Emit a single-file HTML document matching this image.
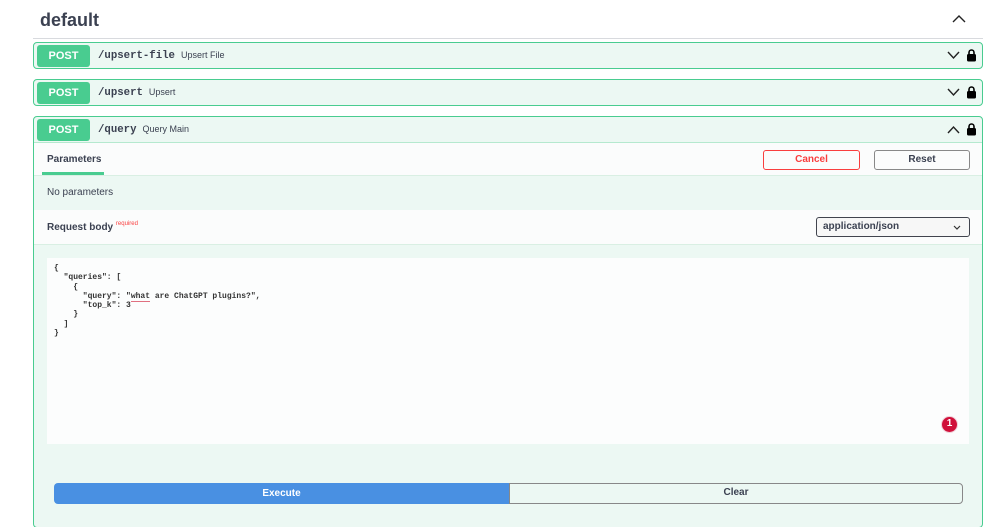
<!DOCTYPE html>
<html><head><meta charset="utf-8"><style>
*{box-sizing:border-box;margin:0;padding:0}
html,body{width:1000px;height:527px;overflow:hidden}
body{background:#fff;font-family:"Liberation Sans",sans-serif;color:#3b4151;position:relative}
.abs{position:absolute}
.blk{position:absolute;left:33px;width:950px;border:1px solid #49cc90;border-radius:4px;background:#ecf8f3}
.post{position:absolute;left:3px;top:2px;width:53px;height:22px;background:#49cc90;border-radius:3px;color:#fff;font-weight:bold;font-size:11px;text-align:center;line-height:22px}
.path{position:absolute;left:64px;top:7px;font-family:"Liberation Mono",monospace;font-weight:bold;font-size:10.7px;color:#3b4151}
.desc{font-family:"Liberation Sans",sans-serif;font-weight:normal;font-size:9px;margin-left:6px}
.chev{position:absolute;right:22px;top:8px}
.lock{position:absolute;right:5px;top:5px}
</style></head><body>
<div class="abs" style="left:40px;top:10px;font-size:18px;font-weight:bold">default</div>
<svg class="abs" style="left:952px;top:14px" width="14" height="10"><path d="M1 8 L7 2 L13 8" fill="none" stroke="#222" stroke-width="1.4"/></svg>
<div class="abs" style="left:33px;top:38px;width:950px;height:1px;background:#d8dade"></div>

<div class="blk" style="top:42px;height:27px">
<div class="post">POST</div><div class="path">/upsert-file<span class="desc">Upsert File</span></div>
<svg class="chev" width="13" height="9"><path d="M1 1 L6.5 7 L12 1" fill="none" stroke="#222" stroke-width="1.4"/></svg>
<svg class="lock" width="11" height="14"><path d="M3 7V4.5a2.5 2.5 0 0 1 5 0V7" fill="none" stroke="#000" stroke-width="1.6"/><rect x="1" y="6" width="9" height="7.5" rx="1.5" fill="#000"/></svg>
</div>
<div class="blk" style="top:79px;height:27px">
<div class="post">POST</div><div class="path">/upsert<span class="desc">Upsert</span></div>
<svg class="chev" width="13" height="9"><path d="M1 1 L6.5 7 L12 1" fill="none" stroke="#222" stroke-width="1.4"/></svg>
<svg class="lock" width="11" height="14"><path d="M3 7V4.5a2.5 2.5 0 0 1 5 0V7" fill="none" stroke="#000" stroke-width="1.6"/><rect x="1" y="6" width="9" height="7.5" rx="1.5" fill="#000"/></svg>
</div>
<div class="blk" style="top:116px;height:412px">
<div class="post">POST</div><div class="path">/query<span class="desc">Query Main</span></div>
<svg class="chev" width="13" height="9"><path d="M1 8 L6.5 2 L12 8" fill="none" stroke="#222" stroke-width="1.4"/></svg>
<svg class="lock" width="11" height="14"><path d="M3 7V4.5a2.5 2.5 0 0 1 5 0V7" fill="none" stroke="#000" stroke-width="1.6"/><rect x="1" y="6" width="9" height="7.5" rx="1.5" fill="#000"/></svg>
<div class="abs" style="left:0;top:25px;width:948px;height:34px;background:#fbfcfc;border-top:1px solid #b5e9cf;border-bottom:1px solid #d9efe3"></div>
<div class="abs" style="left:13px;top:37px;font-size:10px;font-weight:bold">Parameters</div>
<div class="abs" style="left:8px;top:55px;width:62px;height:3px;background:#49cc90"></div>
<div class="abs" style="left:729px;top:33px;width:97px;height:20px;border:1.5px solid #f93e3e;border-radius:3px;color:#f93e3e;font-size:10px;font-weight:bold;text-align:center;line-height:17px">Cancel</div>
<div class="abs" style="left:840px;top:33px;width:96px;height:20px;border:1.5px solid #888;border-radius:3px;font-size:10px;font-weight:bold;text-align:center;line-height:17px">Reset</div>
<div class="abs" style="left:13px;top:70px;font-size:10px">No parameters</div>
<div class="abs" style="left:0;top:93px;width:948px;height:35px;background:#fbfcfc;border-bottom:1px solid #d9efe3"></div>
<div class="abs" style="left:13px;top:105px;font-size:10px;font-weight:bold">Request body <span style="color:#f93e3e;font-size:6px;font-weight:normal;position:relative;top:-5px">required</span></div>
<div class="abs" style="left:782px;top:100px;width:154px;height:20px;border:1.5px solid #41444e;border-radius:3px;background:#f7f7f7;font-size:10px;font-weight:bold;padding-left:6px;line-height:17px">application/json
<svg class="abs" style="right:8px;top:7px" width="8" height="5"><path d="M1 1 L4 4 L7 1" fill="none" stroke="#333" stroke-width="1.2"/></svg></div>
<div class="abs" style="left:13px;top:141px;width:922px;height:186px;background:#fcfdfd;font-family:'Liberation Mono',monospace;font-size:8px;font-weight:bold;line-height:9.3px;padding:6px 7px;white-space:pre;color:#333">{
  "queries": [
    {
      "query": "what are ChatGPT plugins?",
      "top_k": 3
    }
  ]
}</div>
<div class="abs" style="left:97px;top:184px;width:19px;height:1.2px;background:#e07080"></div>
<div class="abs" style="left:907px;top:299px;width:17px;height:17px;border-radius:50%;background:#d0103a;border:1.5px solid #f0d0d8;color:#fff;font-size:10px;font-weight:bold;text-align:center;line-height:14px">1</div>
<div class="abs" style="left:20px;top:366px;width:455px;height:21px;background:#4990e2;border-radius:4px 0 0 4px;color:#fff;font-size:10px;font-weight:bold;text-align:center;line-height:21px">Execute</div>
<div class="abs" style="left:475px;top:366px;width:454px;height:21px;border:1.5px solid #888;border-radius:0 4px 4px 0;font-size:10px;font-weight:bold;text-align:center;line-height:18px">Clear</div>
</div>
</body></html>
